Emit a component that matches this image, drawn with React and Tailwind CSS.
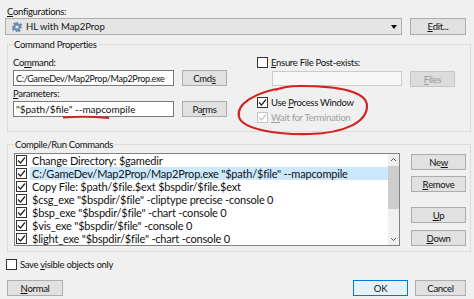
import React from "react";

const Check = ({ checked, disabled, className = "" }) => (
  <span
    className={`flex items-center justify-center w-[11px] h-[11px] shrink-0 border bg-white ${disabled ? "border-[#c4c4c4]" : "border-[#333]"} ${className}`}
  >
    {checked ? (
      <svg width="9" height="9" viewBox="0 0 9 9">
        <path d="M1 4.5 L3.5 7 L8 1.5" fill="none" stroke={disabled ? "#c4c4c4" : "#222"} strokeWidth="1.2" />
      </svg>
    ) : null}
  </span>
);

const Btn = ({ children, w = "w-[55px]", disabled, def }) => (
  <div
    className={`flex items-center justify-center h-[16px] ${w} shrink-0 border ${def ? "border-[#0078d7] bg-[#e5f1fb]" : disabled ? "border-[#c6c6c6] bg-[#dcdcdc] text-[#9a9a9a]" : "border-[#adadad] bg-[#e1e1e1]"}`}
  >
    {children}
  </div>
);

const U = ({ children }) => <span className="underline underline-offset-[1px]">{children}</span>;

const Row = ({ checked = true, children, selected }) => (
  <div className="flex items-center h-[13px] pl-[1px]">
    <Check checked={checked} />
    <span className={`ml-[3px] pl-[2px] h-[13px] flex items-center whitespace-nowrap ${selected ? "bg-[#cce8ff] w-[358px]" : ""}`}>
      {children}
    </span>
  </div>
);

export default function App() {
  return (
    <div className="relative w-[474px] h-[299px] overflow-hidden bg-[#f0f0f0] text-[9.5px] tracking-[-0.3px] leading-[13px] text-[#111] font-['Lato',sans-serif]">
      <div className="pl-[7px] pt-[5px] h-[18px]">
        <U>C</U>onfigurations:
      </div>

      <div className="flex ml-[5px]">
        <div className="flex items-center w-[397px] h-[17px] border border-[#adadad] bg-[#e5e5e5] pl-[6px]">
          <svg width="10" height="10" viewBox="0 0 10 10" className="shrink-0">
            <path
              d="M4 0h2l.3 1.5 1.2.6 1.3-.9 1.4 1.4-.9 1.3.5 1.2L10 4v2l-1.5.3-.6 1.2.9 1.3-1.4 1.4-1.3-.9-1.2.5L6 10H4l-.3-1.5-1.2-.5-1.3.9-1.4-1.4.9-1.3-.5-1.2L0 6V4l1.5-.3.5-1.2-.9-1.3L2.5 .2l1.3.9 1.2-.6z"
              fill="#6d8fb5"
            />
            <circle cx="5" cy="5" r="1.6" fill="#e5e5e5" />
          </svg>
          <span className="ml-[4px] tracking-[0px]">HL with Map2Prop</span>
          <span className="ml-auto mr-[4px] w-0 h-0 border-l-[3px] border-r-[3px] border-t-[4px] border-l-transparent border-r-transparent border-t-black" />
        </div>
        <div className="ml-[8px]">
          <div className="flex items-center justify-center h-[17px] w-[56px] border border-[#adadad] bg-[#e1e1e1]">
            <U>E</U>dit...
          </div>
        </div>
      </div>

      <fieldset className="ml-[7px] mt-[3px] w-[464px] h-[94px] border border-[#dcdcdc] pl-[5px]">
        <legend className="px-[1px]">Command Properties</legend>
        <div className="flex">
          <div className="flex flex-col w-[214px]">
            <div className="mt-[5px]">
              Co<U>m</U>mand:
            </div>
            <div className="flex mt-[1px]">
              <div className="flex items-center w-[161px] h-[16px] border border-[#7a7a7a] bg-white pl-[2px] text-[9px] whitespace-nowrap overflow-hidden">
                C:/GameDev/Map2Prop/Map2Prop.exe
              </div>
              <div className="ml-[8px]">
                <Btn w="w-[45px]">
                  Cmd<U>s</U>
                </Btn>
              </div>
            </div>
            <div className="mt-[1px]">
              <U>P</U>arameters:
            </div>
            <div className="flex mt-[1px]">
              <div className="flex items-center w-[161px] h-[16px] border border-[#7a7a7a] bg-white pl-[2px] text-[10px] tracking-[0px] whitespace-nowrap overflow-hidden">
                "$path/$file" --mapcompile
              </div>
              <div className="ml-[8px]">
                <Btn w="w-[45px]">
                  Pa<U>r</U>ms
                </Btn>
              </div>
            </div>
          </div>

          <div className="flex flex-col ml-[30px]">
            <div className="flex items-center mt-[5px] h-[13px]">
              <Check />
              <span className="ml-[3px]">
                <U>E</U>nsure File Post-exists:
              </span>
            </div>
            <div className="flex ml-[15px] mt-[2px]">
              <div className="w-[130px] h-[15px] border border-[#cccccc] bg-[#f7f7f7]" />
              <div className="ml-[8px]">
                <Btn w="w-[45px]" disabled>
                  <U>F</U>iles
                </Btn>
              </div>
            </div>
            <div className="flex items-center mt-[9px] h-[13px]">
              <Check checked />
              <span className="ml-[3px]">
                Use <U>P</U>rocess Window
              </span>
            </div>
            <div className="flex items-center mt-[2px] h-[13px] text-[#a0a0a0]">
              <Check checked disabled />
              <span className="ml-[3px]">
                <U>W</U>ait for Termination
              </span>
            </div>
          </div>
        </div>
      </fieldset>

      <fieldset className="ml-[7px] mt-[6px] w-[464px] h-[114px] border border-[#dcdcdc] pl-[6px]">
        <legend className="px-[1px]">Compile/Run Commands</legend>
        <div className="flex mt-[2px]">
          <div className="flex w-[386px] h-[93px] border border-[#828282] bg-white overflow-hidden text-[11px] tracking-[-0.2px]">
            <div className="flex flex-col flex-1 overflow-hidden">
              <Row>Change Directory: $gamedir</Row>
              <Row selected>C:/GameDev/Map2Prop/Map2Prop.exe "$path/$file" --mapcompile</Row>
              <Row>Copy File: $path/$file.$ext $bspdir/$file.$ext</Row>
              <Row>$csg_exe "$bspdir/$file" -cliptype precise -console 0</Row>
              <Row>$bsp_exe "$bspdir/$file" -chart -console 0</Row>
              <Row>$vis_exe "$bspdir/$file" -console 0</Row>
              <Row>$light_exe "$bspdir/$file" -chart -console 0</Row>
            </div>
            <div className="flex flex-col items-center w-[11px] shrink-0 bg-[#f0f0f0]">
              <svg width="7" height="12" viewBox="0 0 7 12">
                <path d="M1 7 L3.5 4.5 L6 7" fill="none" stroke="#555" strokeWidth="1" />
              </svg>
              <div className="w-[11px] h-[43px] bg-[#cdcdcd]" />
              <div className="flex-1" />
              <svg width="7" height="12" viewBox="0 0 7 12">
                <path d="M1 5 L3.5 7.5 L6 5" fill="none" stroke="#555" strokeWidth="1" />
              </svg>
            </div>
          </div>
          <div className="flex flex-col ml-[11px] mt-[1px]">
            <Btn>
              Ne<U>w</U>
            </Btn>
            <div className="mt-[6px]">
              <Btn>
                <U>R</U>emove
              </Btn>
            </div>
            <div className="mt-[15px]">
              <Btn>
                <U>U</U>p
              </Btn>
            </div>
            <div className="mt-[7px]">
              <Btn>
                <U>D</U>own
              </Btn>
            </div>
          </div>
        </div>
      </fieldset>

      <div className="flex items-center ml-[6px] mt-[6px] h-[13px]">
        <Check />
        <span className="ml-[3px]">
          Save <U>v</U>isible objects only
        </span>
      </div>

      <div className="flex mt-[9px] ml-[7px]">
        <Btn w="w-[56px]">
          <U>N</U>ormal
        </Btn>
        <div className="ml-auto flex mr-[8px]">
          <Btn def>OK</Btn>
          <div className="ml-[7px]">
            <Btn w="w-[51px]">Cancel</Btn>
          </div>
        </div>
      </div>

      <svg className="absolute left-0 top-0 pointer-events-none" width="474" height="299">
        <path d="M63 117.5 C 76 116.5, 92 116.5, 109 118" fill="none" stroke="#d42323" strokeWidth="2" />
        <path
          d="M283 88 C 255 92, 236 104, 239 117 C 243 130, 280 135, 310 134 C 345 133, 367 122, 367 106 C 367 92, 340 86, 300 86 C 290 86, 280 88, 275 90"
          fill="none"
          stroke="#d42323"
          strokeWidth="2.2"
        />
      </svg>
    </div>
  );
}
